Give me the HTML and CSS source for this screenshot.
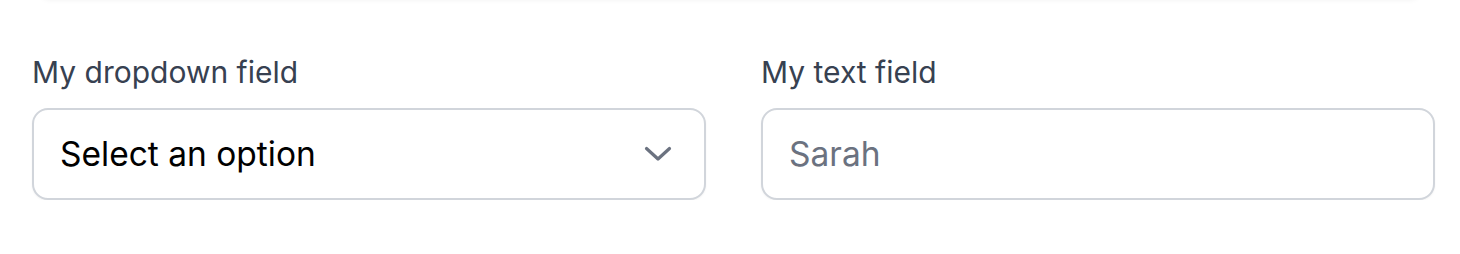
FILE: index.html
```html
<!DOCTYPE html>
<html>
<head>
<meta charset="utf-8">
<link rel="stylesheet" href="styles.css">
</head>
<body>
<div class="card-above"></div>
<div class="form">
  <div class="field">
    <label class="label">My dropdown field</label>
    <div class="control select">
      <span class="value">Select an option</span>
      <svg class="chevron" width="28" height="16" viewBox="0 0 28 16" fill="none">
        <path d="M2.5 2.5 L14 13 L25.5 2.5" stroke="#6b7280" stroke-width="3.2" stroke-linecap="round" stroke-linejoin="round"/>
      </svg>
    </div>
  </div>
  <div class="field">
    <label class="label">My text field</label>
    <div class="control">
      <span class="placeholder">Sarah</span>
    </div>
  </div>
</div>
</body>
</html>
```
FILE: styles.css
```css
html, body {
  margin: 0;
  padding: 0;
  background: #ffffff;
}
body {
  font-family: Inter, "Liberation Sans", sans-serif;
  overflow: hidden;
}
.card-above {
  height: 20px;
  margin: -22px 40px 0 40px;
  background: #fff;
  border-radius: 10px;
  box-shadow: 0 1px 6px rgba(0,0,0,0.08), 0 1px 2px rgba(0,0,0,0.04);
}
.form {
  display: grid;
  grid-template-columns: 674px 674px;
  column-gap: 55px;
  padding: 56px 0 0 32px;
}
.field {
  display: flex;
  flex-direction: column;
}
.label {
  font-size: 30px;
  line-height: 36px;
  color: #374151;
  font-weight: 400;
  margin-bottom: 18px;
}
.control {
  box-sizing: border-box;
  height: 92px;
  border: 2px solid #d1d5db;
  border-radius: 16px;
  box-shadow: 0 1px 2px rgba(0,0,0,0.05);
  display: flex;
  align-items: center;
  padding: 0 32px 0 26px;
  background: #fff;
}
.select {
  justify-content: space-between;
}
.value {
  font-size: 33.5px;
  color: #000;
}
.placeholder {
  font-size: 33.5px;
  color: #6b7280;
}
.chevron {
  display: block;
}
```
